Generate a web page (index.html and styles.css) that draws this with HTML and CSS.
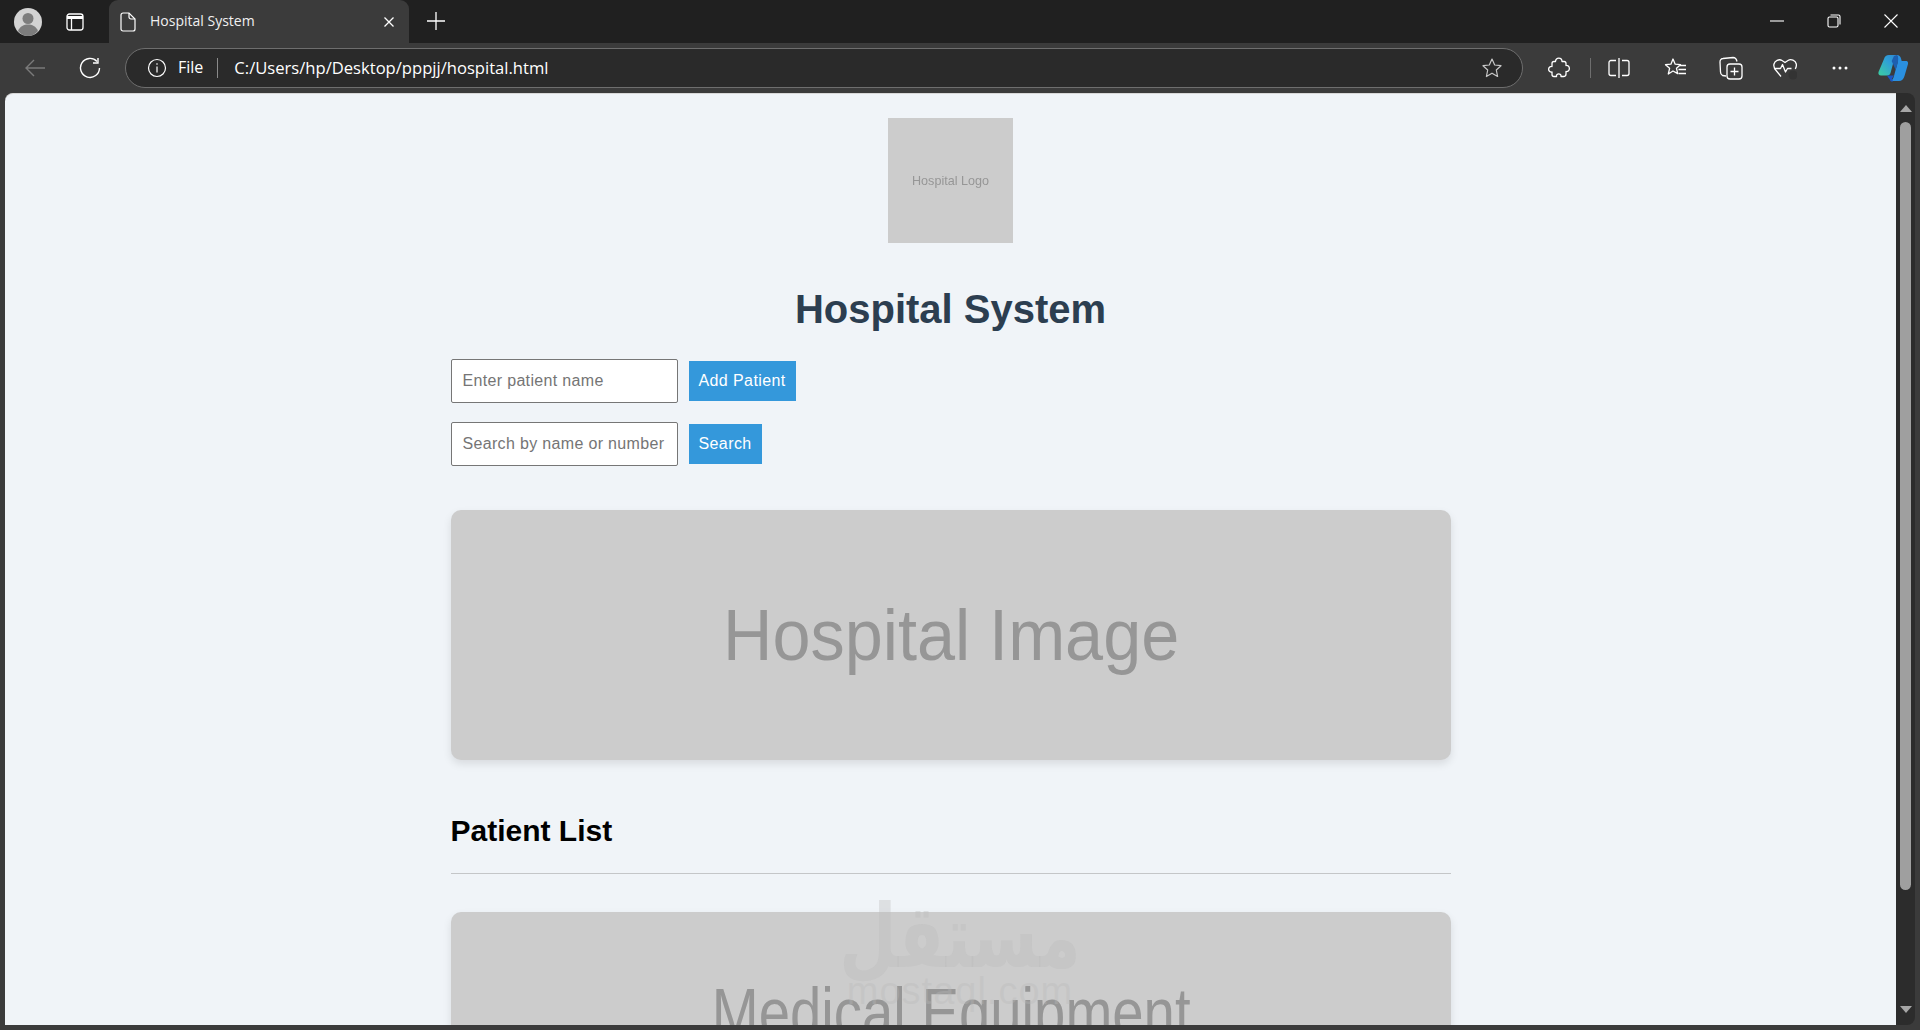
FILE: index.html
```html
<!DOCTYPE html>
<html lang="en">
<head>
  <meta charset="UTF-8" />
  <title>Hospital System</title>
  <link rel="stylesheet" href="styles.css">
</head>
<body>

<div class="titlebar">
  <svg class="avatar" width="28" height="28" viewBox="0 0 28 28">
    <circle cx="14" cy="14" r="14" fill="#d3d3d3"/>
    <circle cx="14" cy="10.5" r="5.5" fill="#7d7d7d"/>
    <path d="M4 23c2-5 6-6.500 10-6.500s8 1.500 10 6.500c-2.500 3-6 5-10 5s-7.500-2-10-5z" fill="#7d7d7d"/>
  </svg>
  <svg class="sidebar-icon" width="18" height="18" viewBox="0 0 18 18" fill="none" stroke="#fff" stroke-width="1.300">
    <rect x="1" y="1" width="16" height="16" rx="2.500"/>
    <path d="M1 4.500h16" stroke-width="3"/>
    <path d="M5.500 5v12"/>
  </svg>
  <div class="tab">
    <svg width="16" height="20" viewBox="0 0 16 20" fill="none" stroke="#fff" stroke-width="1.200">
      <path d="M3 1h6l6 6v10a2 2 0 0 1-2 2H3a2 2 0 0 1-2-2V3a2 2 0 0 1 2-2z"/>
      <path d="M9 1v4a2 2 0 0 0 2 2h4"/>
    </svg>
    <span class="tab-title">Hospital System</span>
    <svg width="12" height="12" viewBox="0 0 12 12" stroke="#fff" stroke-width="1.300">
      <path d="M1.500 1.500l9 9M10.500 1.500l-9 9"/>
    </svg>
  </div>
  <svg class="new-tab" width="18" height="18" viewBox="0 0 18 18" stroke="#fff" stroke-width="1.300">
    <path d="M9 0v18M0 9h18"/>
  </svg>
  <div class="window-btns">
    <svg width="14" height="14" viewBox="0 0 14 14" stroke="#fff" stroke-width="1.100"><path d="M0 7h14"/></svg>
    <svg width="14" height="14" viewBox="0 0 14 14" fill="none" stroke="#fff" stroke-width="1.100">
      <rect x="1" y="3" width="10" height="10" rx="1.500"/>
      <path d="M3.500 1h8a1.500 1.500 0 0 1 1.500 1.500v8"/>
    </svg>
    <svg width="14" height="14" viewBox="0 0 14 14" stroke="#fff" stroke-width="1.100"><path d="M.5.500l13 13M13.500.500l-13 13"/></svg>
  </div>
</div>

<div class="toolbar">
  <svg class="back" width="22" height="20" viewBox="0 0 22 20" fill="none" stroke="#7a7a7a" stroke-width="1.400">
    <path d="M21 10H2M10 2l-8 8 8 8"/>
  </svg>
  <svg class="reload" width="22" height="22" viewBox="0 0 22 22" fill="none" stroke="#fff" stroke-width="1.400">
    <path d="M18 4.500A9.500 9.500 0 1 0 20.500 11"/>
    <path d="M19 1v5h-5"/>
  </svg>
  <div class="address">
    <svg width="20" height="20" viewBox="0 0 20 20" fill="none" stroke="#fff" stroke-width="1.200">
      <circle cx="10" cy="10" r="8.500"/>
      <path d="M10 8.500v6M10 5.200v1.600"/>
    </svg>
    <span class="addr-file">File</span>
    <span class="addr-sep"></span>
    <span class="addr-url">C:/Users/hp/Desktop/pppjj/hospital.html</span>
    <svg class="addr-star" width="22" height="22" viewBox="0 0 22 22" fill="none" stroke="#c8c8c8" stroke-width="1.200">
      <path d="M11 2l2.700 6 6.300.7-4.700 4.300 1.300 6.500L11 16.200 5.400 19.500l1.300-6.500L2 8.700 8.300 8z" stroke-linejoin="round"/>
    </svg>
  </div>
  <div class="tools">
    <svg class="tool" width="24" height="24" viewBox="0 0 24 24" fill="none" stroke="#fff" stroke-width="1.300" stroke-linejoin="round">
      <path d="M8.500 5.500C8.500 1 15 1 15 5.500h2a2 2 0 0 1 2 2v2c4.500-.5 4.500 6.500 0 6v2.500a2.500 2.500 0 0 1-2.500 2.500H14c.5-3.500-5-3.500-4.500 0H7a2 2 0 0 1-2-2v-2.500c-4.500.5-4.500-6 0-5.500V7.500a2 2 0 0 1 2-2z"/>
    </svg>
    <span class="tool-sep"></span>
    <svg class="tool" width="24" height="24" viewBox="0 0 24 24" fill="none" stroke="#fff" stroke-width="1.300">
      <path d="M9 4.500H4a2 2 0 0 0-2 2v11a2 2 0 0 0 2 2h5M15 4.500h5a2 2 0 0 1 2 2v11a2 2 0 0 1-2 2h-5M12 2v20"/>
    </svg>
    <svg class="tool" width="24" height="24" viewBox="0 0 24 24" fill="none" stroke="#fff" stroke-width="1.300" stroke-linejoin="round">
      <path d="M10 3l2.200 5.200 5.300.5-4 3.600 1.200 5.300L10 15l-4.700 3 1.300-5.700-4.100-3.600 5.400-.5z"/>
      <path d="M17 9.500h6M15.500 13.500h7.500M15.500 17.500h7.500"/>
    </svg>
    <svg class="tool tool-coll" width="24" height="24" viewBox="0 0 24 24" fill="none" stroke="#fff" stroke-width="1.300" stroke-linejoin="round">
      <path d="M7 20l-3.500-.5c-1-.5-2-2-2-3.500L1 6c0-2 1.500-3.500 3-3.500L14 1.500c2 0 3.500 1.500 4 4"/>
      <rect x="8" y="8" width="15" height="15" rx="3"/>
      <path d="M15.500 11.500v8M11.500 15.500h8"/>
    </svg>
    <svg class="tool tool-health" width="24" height="24" viewBox="0 0 24 24" fill="none" stroke="#fff" stroke-width="1.300" stroke-linejoin="round">
      <path d="M8 20.500L3.500 15C1 12.500 .500 10 1 8c.700-3 5-5.500 8-3.500l3 2 3-2c3-2 7.500 0 8.300 3.500.3 2-.2 3.500-1 5"/>
      <path d="M2 12.500h5.500l2-4 3 7.500 2-3.500h4"/>
      <circle cx="20" cy="19" r="4.500" fill="#333" stroke="none"/>
    </svg>
    <svg class="tool tool-dots" width="24" height="24" viewBox="0 0 24 24" fill="#fff">
      <circle cx="6" cy="12" r="1.500"/><circle cx="12" cy="12" r="1.500"/><circle cx="18" cy="12" r="1.500"/>
    </svg>
    <svg class="copilot" width="30" height="28" viewBox="0 0 30 28">
      <defs>
        <linearGradient id="cpLeft" x1="0" y1="1" x2="1" y2="0">
          <stop offset="0" stop-color="#3ccfa0"/>
          <stop offset=".6" stop-color="#2f9fd8"/>
          <stop offset="1" stop-color="#2f86d0"/>
        </linearGradient>
      </defs>
      <path d="M11 1h9c-3 1-3.500 3-4.500 7l-3 11c-.500 2-2 2.500-4 2.500H3c-2 0-3-1.500-2.500-3.500L6 5c.700-2.500 2.500-4 5-4z" fill="url(#cpLeft)"/>
      <path d="M19 1c2 0 3.500 1.500 4 3.500l.700 2.500H28c1.500 0 2.300 1 2 3l-3.500 12c-.7 3-3 5-5.500 5H12c3-1 3.500-3 4.500-7l3-11c.300-2 .500-4-.500-8z" fill="#2a90e0"/>
      <path d="M19 1c1.500 2 1.500 4 .700 8l-2 7-4-9 2.300-5z" fill="#1d5fb0"/>
      <path d="M9 21.500h7l-2 3 1 3h-2c-1-2-3-4-4-6z" fill="#1b55c4"/>
    </svg>
  </div>
</div>

<div class="window-body">
  <div class="page">
    <div class="container">
      <div class="logo"><span>Hospital Logo</span></div>
      <h1>Hospital System</h1>

      <div class="form-row">
        <input type="text" placeholder="Enter patient name" />
        <button>Add Patient</button>
      </div>
      <div class="form-row">
        <input type="text" placeholder="Search by name or number" />
        <button>Search</button>
      </div>

      <div class="banner banner-hospital"><span>Hospital Image</span></div>

      <h2>Patient List</h2>
      <hr />

      <div class="banner banner-equipment"><span>Medical Equipment</span></div>
    </div>

    <div class="watermark">
      <div class="wm-ar" dir="rtl" lang="ar"><span>مستقل</span></div>
      <div class="wm-en">mostaql.com</div>
    </div>
  </div>

  <div class="scrollbar">
    <span class="arrow-up"></span>
    <span class="thumb"></span>
    <span class="arrow-down"></span>
  </div>
</div>

</body>
</html>
```

FILE: styles.css
```css
html, body {
  margin: 0;
  height: 100%;
  overflow: hidden;
}
body {
  display: flex;
  flex-direction: column;
  background: #3b3b3b;
  font-family: "Liberation Sans", Arial, sans-serif;
}

/* browser chrome */
.titlebar {
  display: flex;
  align-items: center;
  height: 43px;
  background: #202020;
  flex-shrink: 0;
}
.avatar {
  margin-left: 14px;
}
.sidebar-icon {
  margin-left: 24px;
}
.tab {
  display: flex;
  align-items: center;
  align-self: stretch;
  width: 300px;
  margin-left: 25px;
  padding: 0 14px 0 11px;
  box-sizing: border-box;
  background: #3b3b3b;
  border-radius: 9px 9px 0 0;
  color: #fff;
}
.tab-title {
  flex: 1;
  margin: -2px 0 0 14px;
  font: 14px "Open Sans", sans-serif;
  color: #f0f0f0;
}
.new-tab {
  margin: -1px 0 0 18px;
}
.window-btns {
  display: flex;
  gap: 43px;
  margin: -1px 22px 0 auto;
}

.toolbar {
  display: flex;
  align-items: center;
  height: 50px;
  flex-shrink: 0;
  padding-right: 12px;
  background: #3b3b3b;
}
.back {
  margin-left: 24px;
}
.reload {
  margin-left: 33px;
}
.address {
  display: flex;
  align-items: center;
  flex: 1;
  height: 40px;
  margin-left: 24px;
  padding: 0 19px 0 21px;
  box-sizing: border-box;
  border: 1px solid #6e6e6e;
  border-radius: 20px;
  background: #2a2a2a;
  color: #fff;
  font: 16px "Open Sans", sans-serif;
}
.addr-file {
  margin: -2px 0 0 11px;
  font-size: 16px;
}
.addr-sep {
  width: 1px;
  height: 20px;
  margin: 0 16px 0 14px;
  background: #8a8a8a;
}
.addr-url {
  margin-top: -2px;
  font-size: 16.600px;
}
.addr-star {
  margin-left: auto;
}
.tools {
  display: flex;
  align-items: center;
  gap: 32px;
  margin-left: 24px;
}
.tool-sep {
  width: 1px;
  height: 20px;
  margin: 0 -16px 0 -13px;
  background: #6e6e6e;
}
.tool-coll {
  margin-left: 0;
}
.tool-health {
  margin-left: -2px;
}
.tool-dots {
  margin-left: -1px;
}
.copilot {
  margin-left: -6px;
}

.window-body {
  display: flex;
  flex: 1;
  min-height: 0;
  margin: 0 5px 5px 5px;
}

/* page */
.page {
  position: relative;
  flex: 1;
  overflow: hidden;
  background: #f0f4f8;
  border-top: 1px solid #d8d8d8;
  border-radius: 8px 0 0 0;
  box-sizing: border-box;
}
.container {
  width: 1000px;
  margin: 0 auto;
  padding-top: 24px;
}
.logo {
  display: flex;
  align-items: center;
  justify-content: center;
  width: 125px;
  height: 125px;
  margin: 0 auto;
  background: #cccccc;
  color: #969696;
  font-size: 12.600px;
}
.logo span {
  filter: blur(0.4px);
}
h1 {
  margin: 44px 0 27px;
  text-align: center;
  color: #2c3e50;
  font-size: 40px;
}
.form-row {
  display: flex;
  align-items: center;
  gap: 11px;
  margin-bottom: 19px;
}
input {
  width: 227px;
  height: 44px;
  padding: 0 11px;
  box-sizing: border-box;
  border: 1px solid #767676;
  border-radius: 2px;
  background: #fff;
  font: 16px "Liberation Sans", Arial, sans-serif;
  letter-spacing: 0.33px;
}
input::placeholder {
  color: #757575;
}
button {
  height: 40px;
  padding: 0 10px;
  border: none;
  background: #3498db;
  color: #fff;
  font: 16px "Liberation Sans", Arial, sans-serif;
  letter-spacing: 0.4px;
  cursor: pointer;
}
.banner {
  display: flex;
  align-items: center;
  justify-content: center;
  overflow: hidden;
  background: #cccccc;
  border-radius: 10px;
  box-shadow: 0 4px 8px rgba(0,0,0,0.1);
  color: #969696;
}
.banner span {
  white-space: nowrap;
  filter: blur(0.6px);
}
.banner-hospital {
  height: 250px;
  margin-top: 44px;
  font-size: 72px;
}
.banner-hospital span {
  transform: translateX(1px) scaleX(0.95);
}
.banner-equipment {
  height: 200px;
  font-size: 68px;
}
.banner-equipment span {
  transform: translateX(1px) scaleX(0.828);
}
h2 {
  margin: 54px 0 25px;
  color: #000;
  font-size: 30px;
}
hr {
  height: 1px;
  margin: 0 0 38px;
  border: none;
  background: #c4c6c8;
}

/* watermark lies over the page */
.watermark {
  position: absolute;
  top: 807px;
  left: 835px;
  width: 240px;
  text-align: center;
  color: rgba(185,185,185,0.35);
  pointer-events: none;
}
.wm-ar {
  display: flex;
  justify-content: center;
  font: bold 88px/72px "DejaVu Sans", sans-serif;
  white-space: nowrap;
}
.wm-ar span {
  transform: scaleX(0.75);
}
.wm-en {
  font: 38px/36px "Liberation Sans", Arial, sans-serif;
  letter-spacing: 1px;
  white-space: nowrap;
}

/* scrollbar */
.scrollbar {
  display: flex;
  flex-direction: column;
  align-items: center;
  width: 19px;
  background: #2c2c2c;
  border-radius: 0 8px 8px 0;
}
.arrow-up,
.arrow-down {
  width: 0;
  height: 0;
  border-left: 6px solid transparent;
  border-right: 6px solid transparent;
}
.arrow-up {
  margin-top: 12px;
  border-bottom: 7px solid #a6a6a6;
}
.thumb {
  width: 11px;
  height: 768px;
  margin-top: 10px;
  background: #9f9f9f;
  border-radius: 6px;
}
.arrow-down {
  margin-top: auto;
  margin-bottom: 12px;
  border-top: 7px solid #a6a6a6;
}
```
